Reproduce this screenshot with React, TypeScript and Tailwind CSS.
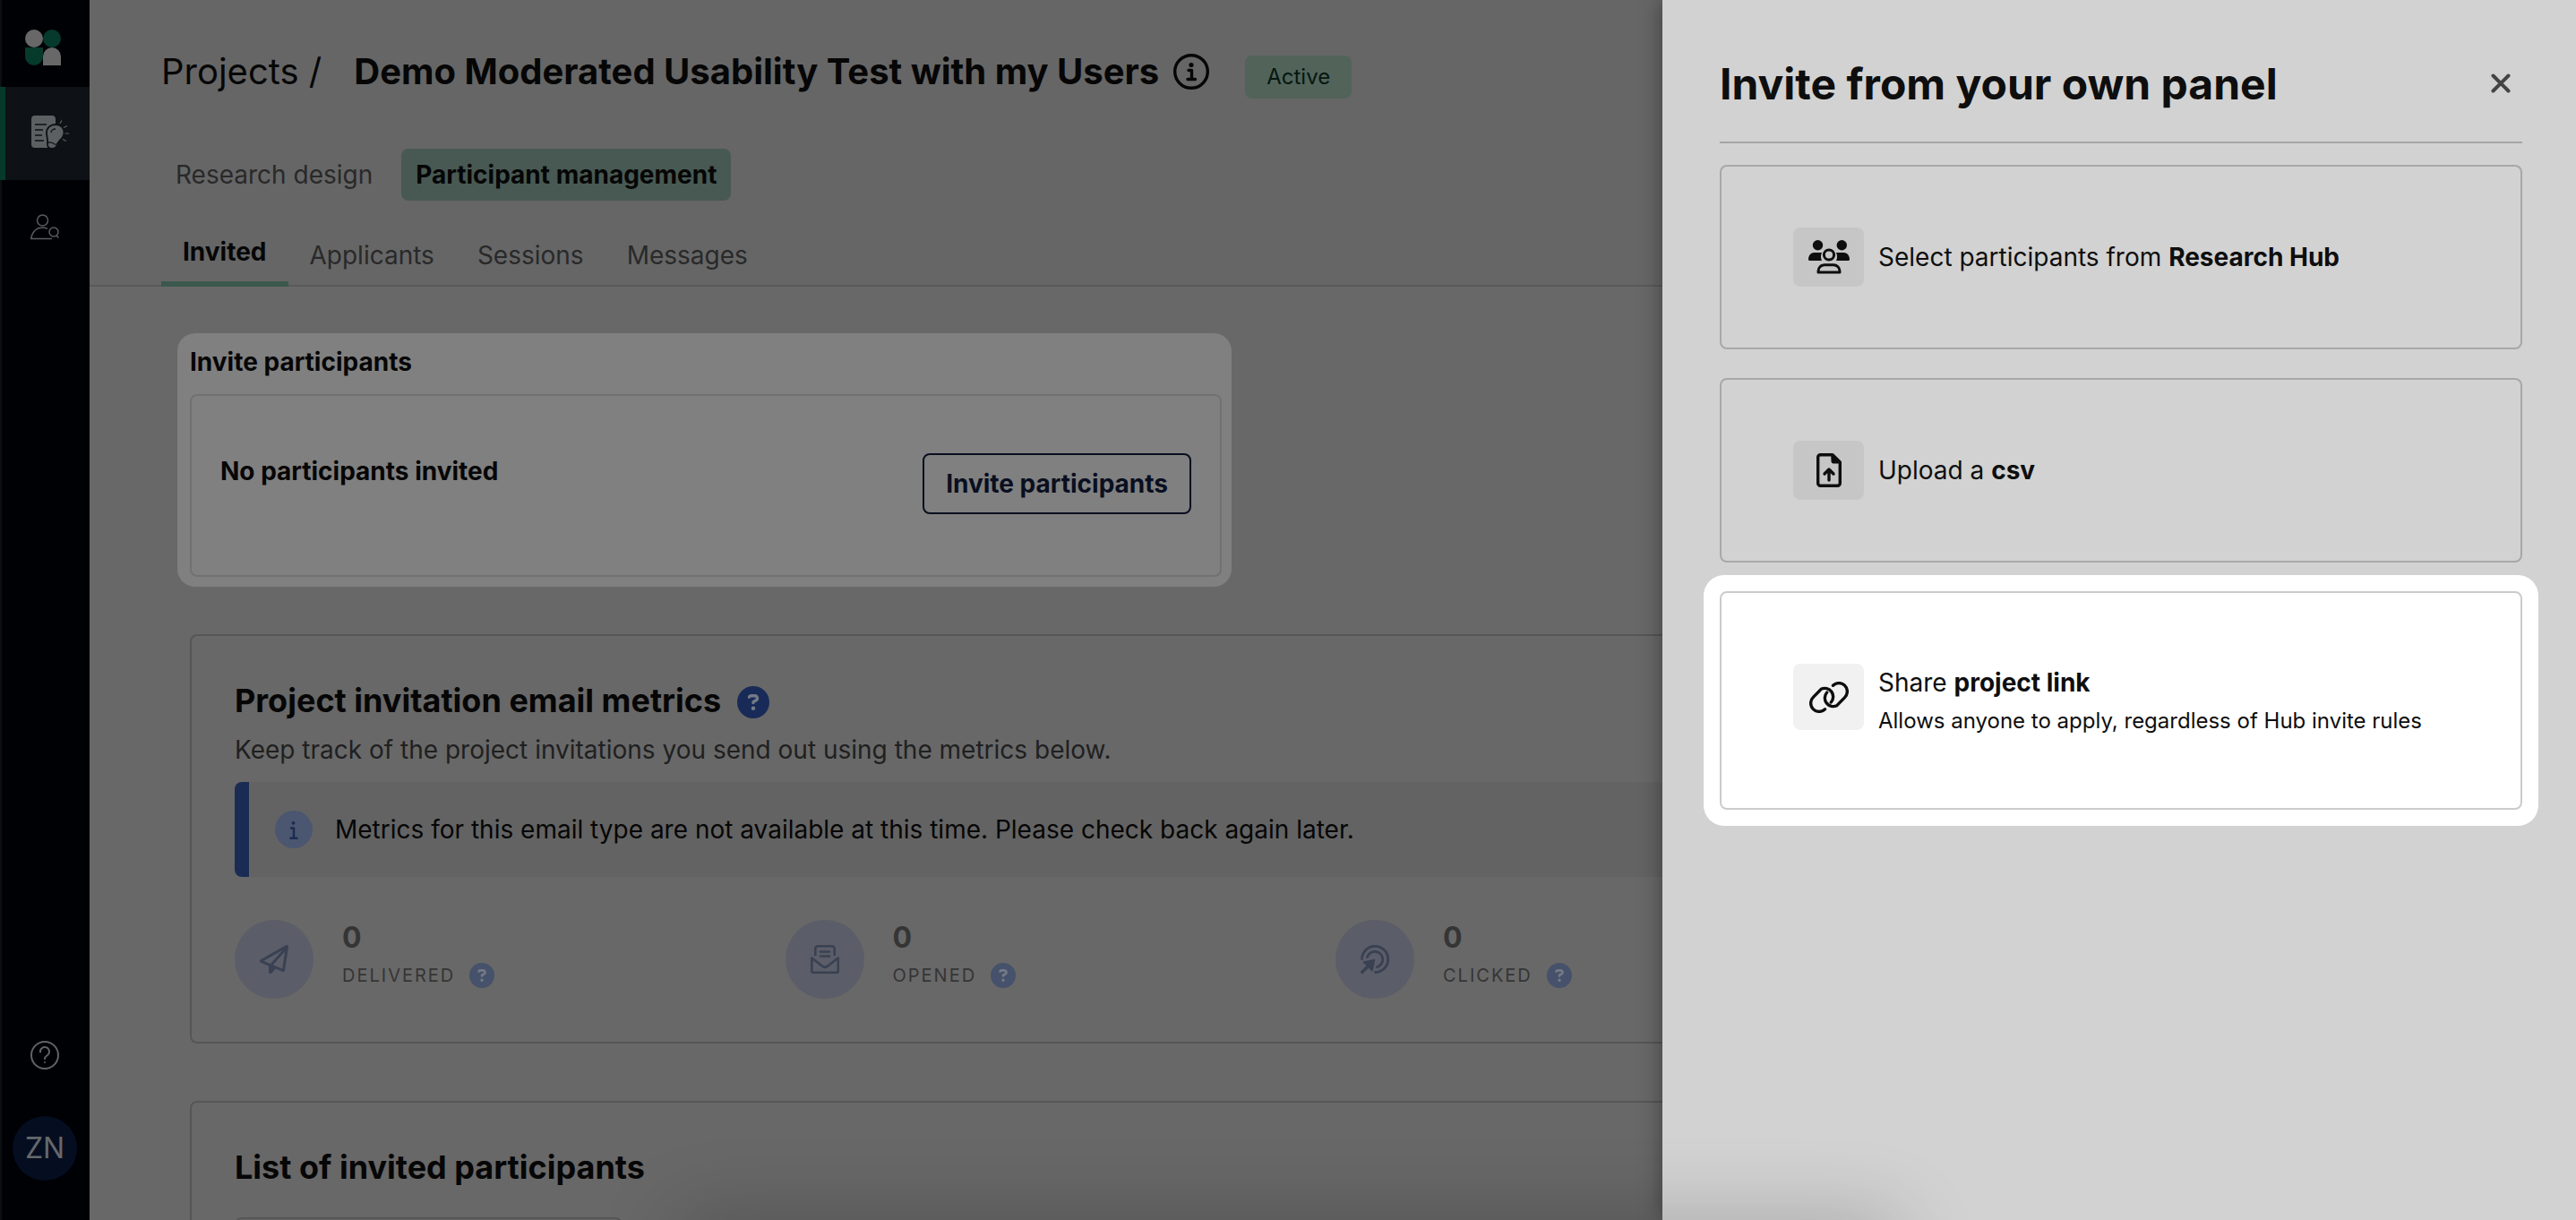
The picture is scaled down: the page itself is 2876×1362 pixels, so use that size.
import type { ReactNode } from 'react'
import { clsx } from 'clsx'
import { FaCircleQuestion, FaRegPaperPlane } from 'react-icons/fa6'

function LogoIcon() {
	return (
		<svg viewBox="0 0 40 40" className="size-10" aria-hidden="true">
			<circle cx="10" cy="10" r="10" fill="#686868" />
			<circle cx="30" cy="10" r="10" fill="#063a2b" />
			<path d="M0 20h20v10a10 10 0 0 1-20 0z" fill="#063a2b" />
			<path d="M20 40V30a10 10 0 0 1 20 0v10z" fill="#686868" />
		</svg>
	)
}

function ProjectsIcon() {
	return (
		<svg viewBox="0 0 42 37" className="h-[37px] w-[42px]" aria-hidden="true">
			<rect width="27" height="36" rx="4" fill="#5d6062" />
			<path
				d="M4 10h13M4 16h9M4 22h8M4 28h10"
				stroke="#0e1115"
				strokeWidth="1.5"
			/>
			<path
				d="M27 10c6 0 9.500 4 9.500 9 0 5-3 7-5 9l-3 4c0 3-2.500 5-5.500 5s-5-2-5-5v-5c0-2-1-4-1-8 0-5 4-9 10-9z"
				fill="#5d6062"
				stroke="#0e1115"
				strokeWidth="1.8"
			/>
			<path
				d="M18.500 30c3-.5 6 .5 8.500 2.500M22 19c0-2 2-4 5-4"
				fill="none"
				stroke="#0e1115"
				strokeWidth="1.3"
			/>
			<path
				d="M32 9l2-3.500M36 13.500l4-2M37.500 20H42M35 26.500l4 2"
				stroke="#5d6062"
				strokeWidth="1.2"
			/>
		</svg>
	)
}

function PersonSearchIcon() {
	return (
		<svg
			viewBox="0 0 32 30"
			className="h-[30px] w-8"
			fill="none"
			stroke="#5b5c5e"
			strokeWidth="1.5"
			aria-hidden="true"
		>
			<circle cx="13.5" cy="7" r="6" />
			<path d="M19 16.500c-1-.8-3-1.200-5-1.200h-1c-7 0-11.500 5-12.200 12.200H24" />
			<circle cx="26" cy="20" r="5" />
			<path d="M29 24l2.500 2.500" />
		</svg>
	)
}

function HelpIcon() {
	return (
		<svg
			viewBox="0 0 32 32"
			className="size-8"
			fill="none"
			stroke="#626365"
			strokeWidth="2"
			strokeLinecap="round"
			aria-hidden="true"
		>
			<circle cx="16" cy="16" r="15" />
			<path d="M11 12.500a5 5 0 1 1 8 3.500c-2 1.300-3 2-3 4" />
			<circle cx="16" cy="24" r="1" fill="#626365" stroke="none" />
		</svg>
	)
}

function InfoRingIcon() {
	return (
		<svg viewBox="0 0 40 40" className="size-10" aria-hidden="true">
			<circle
				cx="20"
				cy="20"
				r="18.3"
				fill="none"
				stroke="currentColor"
				strokeWidth="3.4"
			/>
			<circle cx="20" cy="12.5" r="2.6" fill="currentColor" />
			<path
				d="M17 18.500h3.500v9.500M16 28.500h8.500"
				fill="none"
				stroke="currentColor"
				strokeWidth="3.4"
				strokeLinecap="round"
				strokeLinejoin="round"
			/>
		</svg>
	)
}

function AlertInfoIcon() {
	return (
		<svg viewBox="0 0 42 42" className="size-[42px]" aria-hidden="true">
			<circle cx="21" cy="21" r="21" fill="#4b5670" />
			<circle cx="20.5" cy="13.8" r="1.9" fill="#1b2c54" />
			<path
				d="M18 19.500h3v11M17.500 30.800h7"
				fill="none"
				stroke="#1b2c54"
				strokeWidth="2.4"
				strokeLinecap="round"
				strokeLinejoin="round"
			/>
		</svg>
	)
}

function OpenedIcon() {
	return (
		<svg
			viewBox="0 0 32 32"
			className="size-8"
			fill="none"
			stroke="currentColor"
			strokeWidth="2.6"
			strokeLinecap="round"
			strokeLinejoin="round"
			aria-hidden="true"
		>
			<path d="M5.300 11V4a2.700 2.700 0 0 1 2.700-2.700h16A2.700 2.700 0 0 1 26.700 4v7" />
			<path d="M11 7.500h10M11 12.500h10" />
			<path d="M1.300 14.500V29a1.700 1.700 0 0 0 1.700 1.700h26a1.700 1.700 0 0 0 1.700-1.700V14.500l-12 9.300a4.500 4.500 0 0 1-5.400 0z" />
		</svg>
	)
}

function ClickedIcon() {
	return (
		<svg
			viewBox="0 0 32 32"
			className="size-8"
			fill="none"
			stroke="currentColor"
			strokeWidth="2.8"
			strokeLinecap="round"
			aria-hidden="true"
		>
			<path d="M1.500 15.500A14.600 14.600 0 1 1 16.500 30.500" />
			<path d="M7.500 13.500a8.800 8.800 0 1 1 11 11" />
			<path d="M1.800 30.300L10 22" strokeWidth="3.6" />
			<path
				d="M3.500 19L15.500 16.500 13 28.500z"
				fill="currentColor"
				strokeWidth="1.5"
				strokeLinejoin="round"
			/>
		</svg>
	)
}

function HubIcon() {
	return (
		<svg
			viewBox="0 0 46 38"
			className="h-[38px] w-[46px]"
			fill="currentColor"
			aria-hidden="true"
		>
			<circle cx="10.5" cy="5.8" r="5.7" />
			<circle cx="37.3" cy="5.8" r="5.7" />
			<path d="M6.500 14h8.500a11 11 0 0 0 0 9H1.500A1.500 1.500 0 0 1 0 21.500C0 17 3 14 6.500 14z" />
			<path d="M39.500 14H31a11 11 0 0 1 0 9h13.500a1.500 1.500 0 0 0 1.500-1.500C46 17 43 14 39.500 14z" />
			<g fill="none" stroke="currentColor" strokeWidth="3">
				<circle cx="23" cy="16.5" r="5.6" />
				<path
					d="M18 27.700h10a7 7 0 0 1 7 7v1.300H11v-1.300a7 7 0 0 1 7-7z"
					strokeLinejoin="round"
				/>
			</g>
		</svg>
	)
}

function UploadIcon() {
	return (
		<svg
			viewBox="0 0 28 38"
			className="h-[38px] w-7"
			fill="none"
			stroke="currentColor"
			strokeWidth="3.4"
			strokeLinecap="round"
			strokeLinejoin="round"
			aria-hidden="true"
		>
			<path d="M4.500 1.700H18L26.300 10v23.500a2.800 2.800 0 0 1-2.800 2.800h-19a2.800 2.800 0 0 1-2.800-2.800v-29a2.800 2.800 0 0 1 2.800-2.800z" />
			<path
				d="M17 2l9 9h-7.500a1.500 1.500 0 0 1-1.500-1.500z"
				fill="currentColor"
				strokeWidth="1"
			/>
			<path d="M14 30V19M9 23l5-5 5 5" />
		</svg>
	)
}

function LinkIcon() {
	return (
		<svg
			viewBox="0 0 44 35"
			className="h-[35px] w-11"
			fill="none"
			stroke="currentColor"
			strokeWidth="3.4"
			strokeLinecap="round"
			aria-hidden="true"
		>
			<path d="M17.500 30.700A9.300 9.300 0 0 1 4.400 17.400L13.200 8.300A9.400 9.400 0 0 1 24.300 23" />
			<path d="M26.500 4.300A9.300 9.300 0 0 1 39.600 17.600L30.800 26.700A9.400 9.400 0 0 1 19.700 12" />
		</svg>
	)
}

function CloseIcon() {
	return (
		<svg viewBox="0 0 22 22" className="size-[22px]" aria-hidden="true">
			<path
				d="M2.500 2.500l17 17M19.500 2.500l-17 17"
				stroke="currentColor"
				strokeWidth="4"
				strokeLinecap="round"
			/>
		</svg>
	)
}

// the backing gradient shows through the cut-out question mark
function QuestionIcon({ className }: { className: string }) {
	return (
		<span className="grid place-items-center rounded-full bg-[radial-gradient(#747a86_50%,transparent_50%)]">
			<FaCircleQuestion className={className} />
		</span>
	)
}

function Sidebar() {
	return (
		<aside className="flex w-[100px] shrink-0 flex-col border-l-2 border-[#0c1012] bg-[#000105] pb-11">
			<a
				href="#home"
				aria-label="Home"
				className="flex h-[97px] items-center pt-2 pl-[26px]"
			>
				<LogoIcon />
			</a>
			<a
				href="#projects"
				aria-label="Projects"
				className="-ml-0.5 flex h-[104px] items-center border-l-6 border-[#06392a] bg-[#0e1115] pb-1 pl-[29px]"
			>
				<ProjectsIcon />
			</a>
			<a
				href="#participants"
				aria-label="Participants"
				className="flex h-[104px] items-center pt-0.5 pl-8"
			>
				<PersonSearchIcon />
			</a>
			<div className="mt-auto flex flex-col items-center gap-[52px] pr-0.5">
				<button type="button" aria-label="Help">
					<HelpIcon />
				</button>
				<button
					type="button"
					className="flex size-18 items-center justify-center rounded-full bg-[#050e20] text-[32px] text-[#66686c]"
				>
					ZN
				</button>
			</div>
		</aside>
	)
}

const tabs = [
	{ name: 'Invited', active: true },
	{ name: 'Applicants', active: false },
	{ name: 'Sessions', active: false },
	{ name: 'Messages', active: false },
]

function ProjectHeader() {
	return (
		<header className="bg-[#666666] pt-14">
			<div className="flex items-start px-20">
				<a href="#projects" className="text-[40px] leading-12">
					Projects /
				</a>
				<h1 className="ml-9 text-[40px] leading-12 font-bold">
					Demo Moderated Usability Test with my Users
				</h1>
				<button
					type="button"
					aria-label="Project details"
					className="mt-1 ml-4"
				>
					<InfoRingIcon />
				</button>
				<span className="mt-1.5 ml-10 rounded-lg bg-[#52635a] px-6 text-2xl leading-12 text-[#04180f]">
					Active
				</span>
			</div>

			<div className="mt-14 flex gap-4 px-20 text-[28px]">
				<button type="button" className="h-[58px] px-4 text-[#29292a]">
					Research design
				</button>
				<button
					type="button"
					className="h-[58px] rounded-lg bg-[#485953] px-4 font-bold"
				>
					Participant management
				</button>
			</div>

			<nav className="mt-[26px] flex h-[70px] border-b-2 border-[#5a5a5a] px-20 text-[28px]">
				{tabs.map((tab) => (
					<a
						key={tab.name}
						href={`#${tab.name.toLowerCase()}`}
						className={clsx(
							'-mb-0.5 flex items-center px-6',
							tab.active
								? 'border-b-6 border-[#3b584d] pb-0.5 font-bold'
								: 'text-[#29292a]',
						)}
					>
						{tab.name}
					</a>
				))}
			</nav>
		</header>
	)
}

function InviteBox() {
	return (
		<section className="w-[1177px] rounded-[20px] bg-[#808080] pt-[11px] pr-[11px] pb-[11px] pl-[14px] text-[28px]">
			<h2 className="leading-[42px] font-bold">Invite participants</h2>
			<div className="mt-[15px] flex min-h-[204px] items-start justify-between rounded-lg border-2 border-[#717171] px-8 pt-16">
				<p className="leading-10 font-bold">No participants invited</p>
				<button
					type="button"
					className="h-[68px] rounded-lg border-2 border-[#090f20] px-6 font-bold text-[#090f20]"
				>
					Invite participants
				</button>
			</div>
		</section>
	)
}

const metrics = [
	{
		label: 'DELIVERED',
		value: 0,
		icon: <FaRegPaperPlane className="size-8" />,
	},
	{ label: 'OPENED', value: 0, icon: <OpenedIcon /> },
	{ label: 'CLICKED', value: 0, icon: <ClickedIcon /> },
]

function MetricsCard() {
	return (
		<section className="mt-[53px] ml-[14px] rounded-lg border-2 border-[#565656] p-12">
			<div className="flex items-center gap-[18px]">
				<h2 className="text-4xl leading-12 font-bold">
					Project invitation email metrics
				</h2>
				<button type="button" aria-label="About these metrics" className="mt-1">
					<QuestionIcon className="size-9 text-[#182b58]" />
				</button>
			</div>
			<p className="mt-2.5 text-[28px] leading-[42px] text-[#202020]">
				Keep track of the project invitations you send out using the metrics
				below.
			</p>
			<div className="mt-[15px] flex h-[106px] items-center gap-[25px] rounded-lg border-l-16 border-[#1b2c54] bg-[#636363] pl-[29px] text-[28px]">
				<AlertInfoIcon />
				<p>
					Metrics for this email type are not available at this time. Please
					check back again later.
				</p>
			</div>
			<div className="mt-12 grid grid-cols-4">
				{metrics.map((m) => (
					<div key={m.label} className="flex items-start gap-8">
						<div className="flex size-22 items-center justify-center rounded-full bg-[#5b5d68] text-[#394152]">
							{m.icon}
						</div>
						<div className="pt-1 text-[#353535]">
							<div className="text-[32px] leading-8 font-bold">{m.value}</div>
							<div className="mt-3 flex items-center gap-4">
								<span className="text-xl tracking-widest">{m.label}</span>
								<button type="button" aria-label={`About ${m.label}`}>
									<QuestionIcon className="size-7 text-[#46516b]" />
								</button>
							</div>
						</div>
					</div>
				))}
			</div>
		</section>
	)
}

function InvitedList() {
	return (
		<section className="mt-16 ml-[14px] rounded-lg border-2 border-[#565656] p-12">
			<h2 className="text-4xl leading-12 font-bold">
				List of invited participants
			</h2>
			<input
				type="search"
				aria-label="Search participants"
				className="mt-8 h-16 w-[433px] rounded-lg border-2 border-[#565656]"
			/>
		</section>
	)
}

function InviteOption({
	icon,
	lead,
	strong,
	note,
}: {
	icon: ReactNode
	lead: string
	strong: string
	note?: string
}) {
	return (
		<button
			type="button"
			className={clsx(
				'flex w-full items-center rounded-lg border-2 pl-20 text-left',
				note
					? 'min-h-[244px] border-[#cbcbcb] bg-white ring-18 ring-white'
					: 'min-h-[206px] border-[#a8a8a8]',
			)}
		>
			<span className="flex items-start gap-4">
				<span
					className={clsx(
						'flex w-[79px] items-center justify-center rounded-lg',
						note ? 'h-[74px] bg-[#f1f1f1]' : 'h-[66px] bg-[#c6c6c6]',
					)}
				>
					{icon}
				</span>
				<span className={clsx('block', !note && 'self-center')}>
					<span className="block text-[28px] leading-[42px]">
						{lead} <strong className="font-bold">{strong}</strong>
					</span>
					{note && <span className="mt-1 block text-2xl leading-9">{note}</span>}
				</span>
			</span>
		</button>
	)
}

function InvitePanel() {
	return (
		<aside className="absolute inset-y-0 right-0 w-[1020px] bg-[#d2d2d2] px-[60px] pt-16 pl-16 text-[#0e0e0e] shadow-[0_0_24px_rgba(0,0,0,0.4)]">
			<div className="flex h-24 items-start justify-between border-b-2 border-[#a5a5a5] pr-[13px]">
				<h2 className="text-5xl leading-[60px] font-bold">
					Invite from your own panel
				</h2>
				<button
					type="button"
					aria-label="Close"
					className="mt-[18px] text-[#444444]"
				>
					<CloseIcon />
				</button>
			</div>
			<div className="mt-6 flex flex-col gap-8">
				<InviteOption
					icon={<HubIcon />}
					lead="Select participants from"
					strong="Research Hub"
				/>
				<InviteOption icon={<UploadIcon />} lead="Upload a" strong="csv" />
				<InviteOption
					icon={<LinkIcon />}
					lead="Share"
					strong="project link"
					note="Allows anyone to apply, regardless of Hub invite rules"
				/>
			</div>
		</aside>
	)
}

export default function App() {
	return (
		<div className="relative flex h-screen overflow-hidden bg-[#686868] font-['Inter',sans-serif] text-[#060606]">
			<Sidebar />
			<main className="min-w-0 flex-1">
				<ProjectHeader />
				<div className="pt-[52px] pr-[106px] pl-[98px]">
					<InviteBox />
					<MetricsCard />
					<InvitedList />
				</div>
			</main>
			<InvitePanel />
			{/* soft shade rising from the bottom edge */}
			<div className="pointer-events-none absolute top-full left-1/2 h-20 w-[1360px] -translate-x-1/2 shadow-[0_0_90px_rgba(0,0,0,0.22)]" />
		</div>
	)
}
